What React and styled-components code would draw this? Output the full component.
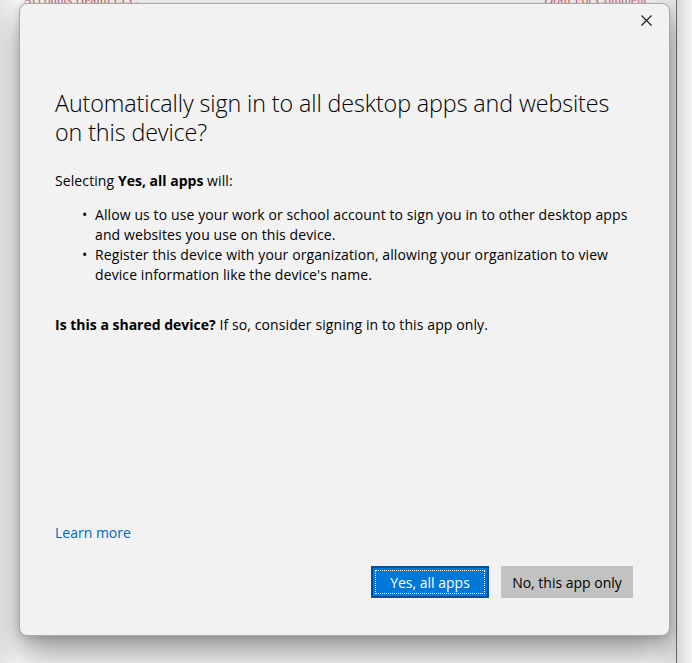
import React from "react";
import styled, { createGlobalStyle } from "styled-components";

const GlobalStyle = createGlobalStyle`
  html, body {
    margin: 0;
    padding: 0;
    background: #ffffff;
    overflow: hidden;
  }
  #root {
    width: 692px;
    height: 663px;
  }
`;

const App = () => {
  return (
    <Screen>
      <GlobalStyle />
      <Backdrop>
        <PageHeader>
          <RedText>Accounts Health LLC</RedText>
          <RedText>Draft For Comment</RedText>
        </PageHeader>
        <Dialog>
          <TitleBar>
            <CloseButton aria-label="Close">
              <svg width="11" height="11" viewBox="0 0 11 11">
                <path d="M0.5 0.5 L10.5 10.5 M10.5 0.5 L0.5 10.5" stroke="#1a1a1a" strokeWidth="1.1" fill="none" />
              </svg>
            </CloseButton>
          </TitleBar>
          <Body>
            <Title>Automatically sign in to all desktop apps and websites on this device?</Title>
            <Text>
              Selecting <b>Yes, all apps</b> will:
            </Text>
            <List>
              <Item>Allow us to use your work or school account to sign you in to other desktop apps and websites you use on this device.</Item>
              <Item>Register this device with your organization, allowing your organization to view device information like the device's name.</Item>
            </List>
            <Text>
              <b>Is this a shared device?</b> If so, consider signing in to this app only.
            </Text>
          </Body>
          <Footer>
            <Link href="#">Learn more</Link>
            <Actions>
              <Button $primary>
                <FocusRing>Yes, all apps</FocusRing>
              </Button>
              <Button>No, this app only</Button>
            </Actions>
          </Footer>
        </Dialog>
      </Backdrop>
      <WindowEdge />
    </Screen>
  );
};
export default App;

const Screen = styled.div`
  width: 692px;
  height: 663px;
  display: flex;
  flex-direction: row;
  overflow: hidden;
  font-family: "Segoe UI", "Open Sans", "Noto Sans", sans-serif;
`;
const Backdrop = styled.div`
  width: 677px;
  height: 663px;
  display: flex;
  flex-direction: column;
  padding-left: 19px;
  box-sizing: border-box;
  background: linear-gradient(90deg, #e6e6e6 0px, #fafafa 19px, #fafafa 650px, #e2e2e2 676px);
  border-right: 1px solid #6f6f6f;
`;
const PageHeader = styled.div`
  height: 3px;
  width: 650px;
  display: flex;
  justify-content: space-between;
  align-items: flex-end;
  overflow: hidden;
  padding: 0 22px 0 4px;
  box-sizing: border-box;
`;
const RedText = styled.span`
  font-family: "Liberation Serif", serif;
  font-size: 13px;
  line-height: 7px;
  color: #d06a6a;
`;
const Dialog = styled.div`
  width: 651px;
  height: 633px;
  box-sizing: border-box;
  background: #f2f2f2;
  border: 1px solid #a9a9a9;
  border-radius: 8px;
  box-shadow: 0 16px 32px rgba(0, 0, 0, 0.4), 0 2px 8px rgba(0, 0, 0, 0.14);
  display: flex;
  flex-direction: column;
  color: #000;
`;
const TitleBar = styled.div`
  height: 32px;
  display: flex;
  justify-content: flex-end;
  align-items: flex-start;
`;
const CloseButton = styled.div`
  width: 46px;
  height: 30px;
  display: flex;
  justify-content: center;
  align-items: center;
  padding-top: 2px;
  box-sizing: border-box;
`;
const Body = styled.div`
  flex: 1;
  padding: 53px 30px 0 35px;
  display: flex;
  flex-direction: column;
`;
const Title = styled.h1`
  margin: 0 0 24px 0;
  font-weight: 300;
  font-size: 23.3px;
  line-height: 29px;
  letter-spacing: -0.1px;
`;
const Text = styled.p`
  margin: 0;
  font-size: 14px;
  line-height: 20px;
  letter-spacing: 0.1px;
  b {
    font-weight: 700;
    letter-spacing: 0;
  }
`;
const List = styled.ul`
  margin: 14px 0 30px 0;
  padding-left: 40px;
  list-style: none;
  display: flex;
  flex-direction: column;
`;
const Item = styled.li`
  position: relative;
  font-size: 14px;
  line-height: 20px;
  letter-spacing: 0.1px;
  &::before {
    content: "•";
    position: absolute;
    left: -13px;
    top: 0;
  }
`;
const Footer = styled.div`
  padding: 0 36px 37px 35px;
  display: flex;
  flex-direction: column;
`;
const Link = styled.a`
  font-size: 14px;
  line-height: 20px;
  color: #0067c0;
  text-decoration: none;
  align-self: flex-start;
  margin-bottom: 23px;
`;
const Actions = styled.div`
  display: flex;
  justify-content: flex-end;
  gap: 12px;
`;
const Button = styled.div`
  height: 32px;
  box-sizing: border-box;
  padding: ${(p) => (p.$primary ? "2px" : "0 10px")};
  width: ${(p) => (p.$primary ? "118px" : "132px")};
  display: flex;
  align-items: center;
  justify-content: center;
  font-size: 14px;
  background: ${(p) => (p.$primary ? "#0078d7" : "#c2c2c2")};
  color: ${(p) => (p.$primary ? "#fff" : "#000")};
  border: ${(p) => (p.$primary ? "2px solid #00509e" : "none")};
`;
const FocusRing = styled.span`
  flex: 1;
  align-self: stretch;
  display: flex;
  align-items: center;
  justify-content: center;
  border: 1px dotted #ffffff;
`;
const WindowEdge = styled.div`
  flex: 1;
  background: linear-gradient(90deg, #d8d8d8, #f4f4f4);
`;
